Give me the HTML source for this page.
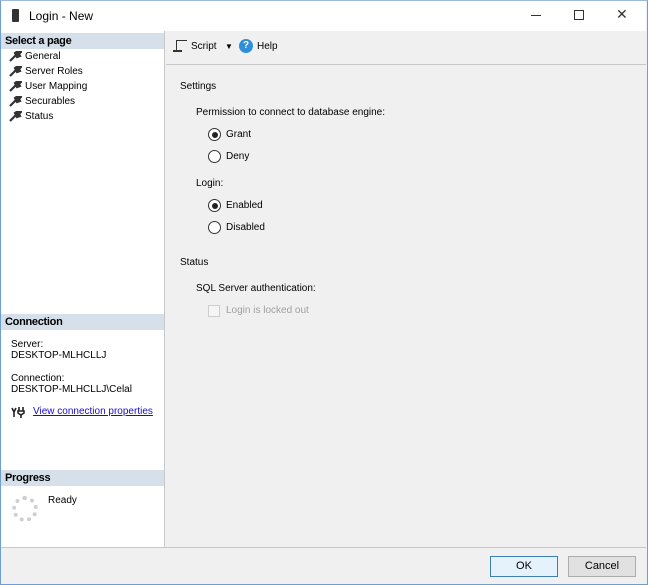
<!DOCTYPE html>
<html><head><style>
*{margin:0;padding:0;box-sizing:border-box}
body{width:648px;height:585px;position:relative;overflow:hidden;background:#f0f0f0;font-family:"Liberation Sans",sans-serif;font-size:10px;color:#000}
.a{position:absolute;white-space:nowrap}
.win{position:absolute;left:0;top:0;width:648px;height:585px;border:1px solid #6f9fcf;border-top:1px solid #9bbbd9}
.title{position:absolute;left:1px;top:1px;width:645px;height:30px;background:#fff}
.left{position:absolute;left:1px;top:31px;width:164px;height:516px;background:#fff;border-right:1px solid #c8c8c8}
.hdr{position:absolute;left:1px;width:163px;height:16px;background:#d5e0ea;font-weight:bold;font-size:11px;padding:2px 0 0 4px;letter-spacing:-0.3px}
.radio{position:absolute;width:13px;height:13px;border:1px solid #333;border-radius:50%;background:#fff}
.radio.on::after{content:"";position:absolute;left:2.5px;top:2.5px;width:6px;height:6px;border-radius:50%;background:#222}
.wr{position:absolute;width:13px;height:11px}
.btn{position:absolute;height:21px;border:1px solid #adadad;background:#e1e1e1;text-align:center;line-height:19px;font-size:11px}
</style></head><body>
<div class="win"></div>
<div class="title"></div>
<div class="a" style="left:12px;top:9px;width:7px;height:13px;background:#333;border-radius:1px"></div>
<div class="a" style="left:29px;top:9px;font-size:12px">Login - New</div>
<div class="a" style="left:531px;top:15px;width:10px;height:1px;background:#333"></div>
<div class="a" style="left:574px;top:10px;width:10px;height:10px;border:1px solid #333"></div>
<div class="a" style="left:616px;top:6px;font-size:14px;color:#333">✕</div>

<div class="left"></div>
<div class="hdr" style="top:33px">Select a page</div>
<svg class="wr" style="left:9px;top:51px" viewBox="0 0 13 11"><path d="M1 10 L7 4 M6 2 L9 0 L12 1 L10 3 L11 5 L8 6 Z" stroke="#333" stroke-width="2.2" fill="#333"/></svg>
<div class="a" style="left:25px;top:51px">General</div>
<svg class="wr" style="left:9px;top:66px" viewBox="0 0 13 11"><path d="M1 10 L7 4 M6 2 L9 0 L12 1 L10 3 L11 5 L8 6 Z" stroke="#333" stroke-width="2.2" fill="#333"/></svg>
<div class="a" style="left:25px;top:66px">Server Roles</div>
<svg class="wr" style="left:9px;top:81px" viewBox="0 0 13 11"><path d="M1 10 L7 4 M6 2 L9 0 L12 1 L10 3 L11 5 L8 6 Z" stroke="#333" stroke-width="2.2" fill="#333"/></svg>
<div class="a" style="left:25px;top:81px">User Mapping</div>
<svg class="wr" style="left:9px;top:96px" viewBox="0 0 13 11"><path d="M1 10 L7 4 M6 2 L9 0 L12 1 L10 3 L11 5 L8 6 Z" stroke="#333" stroke-width="2.2" fill="#333"/></svg>
<div class="a" style="left:25px;top:96px">Securables</div>
<svg class="wr" style="left:9px;top:111px" viewBox="0 0 13 11"><path d="M1 10 L7 4 M6 2 L9 0 L12 1 L10 3 L11 5 L8 6 Z" stroke="#333" stroke-width="2.2" fill="#333"/></svg>
<div class="a" style="left:25px;top:111px">Status</div>

<div class="hdr" style="top:314px">Connection</div>
<div class="a" style="left:11px;top:339px">Server:</div>
<div class="a" style="left:11px;top:350px">DESKTOP-MLHCLLJ</div>
<div class="a" style="left:11px;top:373px">Connection:</div>
<div class="a" style="left:11px;top:384px">DESKTOP-MLHCLLJ\Celal</div>
<svg class="a" style="left:11px;top:406px" width="14" height="12" viewBox="0 0 14 12"><path d="M1 2 L3 6 L5 2 M3 6 V11 M8 1 V5 M12 1 V5 M7 5 H13 V7 L10 9 L7 7 Z M10 9 V12" stroke="#222" stroke-width="1.6" fill="none"/></svg>
<div class="a" style="left:33px;top:406px;color:#1a0dcc;text-decoration:underline">View connection properties</div>

<div class="hdr" style="top:470px">Progress</div>
<div class="a" style="left:12px;top:496px;width:26px;height:26px;border:4px dotted #cfcfcf;border-radius:50%"></div>
<div class="a" style="left:48px;top:495px">Ready</div>

<div class="a" style="left:166px;top:64px;width:480px;height:1px;background:#c8c8c8"></div>
<div class="a" style="left:176px;top:40px;width:11px;height:11px;border:1.5px solid #333;border-right:none;border-bottom:none"></div>
<div class="a" style="left:173px;top:50px;width:9px;height:2px;background:#333"></div>
<div class="a" style="left:191px;top:41px">Script</div>
<div class="a" style="left:225px;top:42px;font-size:8px">▼</div>
<div class="a" style="left:239px;top:39px;width:14px;height:14px;border-radius:50%;background:#2f8fd8;color:#fff;font-weight:bold;font-size:10px;text-align:center;line-height:14px">?</div>
<div class="a" style="left:257px;top:41px">Help</div>

<div class="a" style="left:180px;top:81px">Settings</div>
<div class="a" style="left:196px;top:107px">Permission to connect to database engine:</div>
<div class="radio on" style="left:208px;top:128px"></div>
<div class="a" style="left:226px;top:129px">Grant</div>
<div class="radio" style="left:208px;top:150px"></div>
<div class="a" style="left:226px;top:151px">Deny</div>
<div class="a" style="left:196px;top:178px">Login:</div>
<div class="radio on" style="left:208px;top:199px"></div>
<div class="a" style="left:226px;top:200px">Enabled</div>
<div class="radio" style="left:208px;top:221px"></div>
<div class="a" style="left:226px;top:222px">Disabled</div>
<div class="a" style="left:180px;top:257px">Status</div>
<div class="a" style="left:196px;top:283px">SQL Server authentication:</div>
<div class="a" style="left:208px;top:305px;width:12px;height:12px;border:1px solid #ccc;background:#f5f5f5"></div>
<div class="a" style="left:226px;top:305px;color:#a0a0a0">Login is locked out</div>

<div class="a" style="left:1px;top:547px;width:645px;height:1px;background:#c8c8c8"></div>
<div class="btn" style="left:490px;top:556px;width:68px;border:1px solid #3c7fb1;background:#e5f1fb">OK</div>
<div class="btn" style="left:568px;top:556px;width:68px">Cancel</div>
</body></html>
